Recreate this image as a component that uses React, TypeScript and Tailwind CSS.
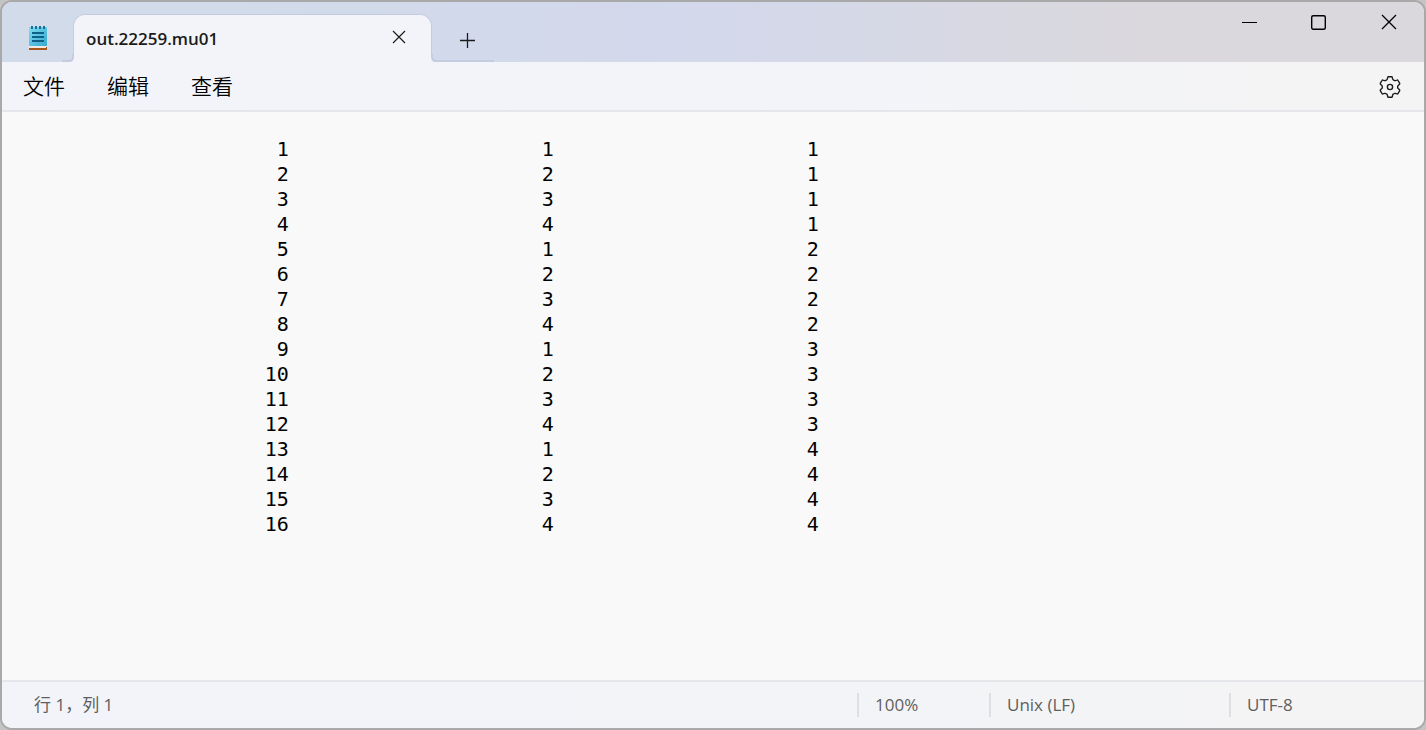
const MENUS = ["文件", "编辑", "查看"];

const ROWS = Array.from({ length: 16 }, (_, i) => [i + 1, (i % 4) + 1, Math.floor(i / 4) + 1]);
const TEXT = ROWS.map((row) => row.map((n) => String(n).padStart(22)).join("")).join("\n");

const STATUS = [
  { text: "100%", width: "w-[132px]" },
  { text: "Unix (LF)", width: "w-[240px]" },
  { text: "UTF-8", width: "w-[195px]" },
];

function NotepadIcon() {
  return (
    <svg className="h-6 w-[18px]" viewBox="0 0 18 24" aria-hidden="true">
      <defs>
        <linearGradient id="pad" x1="0" y1="0" x2="1" y2="1">
          <stop offset="0" stopColor="#7fdcf2" />
          <stop offset="1" stopColor="#35a9cf" />
        </linearGradient>
      </defs>
      <rect x="0" y="21" width="18" height="3" fill="#a9561a" />
      <rect x="0" y="19" width="17" height="3" fill="#f1e9e2" />
      <rect x="0" y="1" width="18" height="19" rx="1" fill="url(#pad)" />
      <path d="M3 0v3M7 0v3M11 0v3M15 0v3" stroke="#1d6f96" strokeWidth="2" />
      <path d="M3 7h12M3 11h12M3 15h12" stroke="#0f6089" strokeWidth="2" />
    </svg>
  );
}

function GearIcon() {
  return (
    <svg className="h-6 w-6" viewBox="0 0 24 24" fill="none" stroke="#1b1b1b" strokeWidth="1.4" strokeLinejoin="round" aria-hidden="true">
      <path d="M10.400 1.800h3.200q.6 0 .7.600l.4 1.700q.2.700.9 1l.5.300q.6.400 1.300.200l1.700-.5q.6-.2.900.4l1.600 2.700q.3.500-.1 1l-1.300 1.200q-.5.500-.5 1.200v.8q0 .7.500 1.200l1.300 1.200q.4.500.1 1l-1.600 2.700q-.3.600-.9.400l-1.700-.5q-.7-.2-1.300.2l-.5.300q-.7.300-.9 1l-.4 1.700q-.1.600-.7.600h-3.200q-.6 0-.7-.6l-.4-1.700q-.2-.7-.9-1l-.5-.3q-.6-.4-1.300-.2l-1.700.5q-.6.200-.9-.4l-1.600-2.700q-.3-.5.1-1l1.300-1.200q.5-.5.500-1.200v-.8q0-.7-.5-1.200l-1.300-1.200q-.4-.5-.1-1l1.600-2.700q.3-.6.900-.4l1.700.5q.7.200 1.300-.2l.5-.3q.7-.3.900-1l.4-1.700q.1-.6.700-.6z" />
      <circle cx="12" cy="12" r="2.600" />
    </svg>
  );
}

// curved foot where the tab runs into the toolbar
function TabFoot({ className }: { className: string }) {
  return (
    <svg className={`absolute bottom-0 h-2 w-3 ${className}`} viewBox="0 0 12 8" aria-hidden="true">
      <path d="M12 0v8H7q4 0 4-4V0z" fill="#f3f4f9" />
      <path d="M0 7h7q4 0 4-4V0" fill="none" stroke="#c5cce0" strokeWidth="2" />
    </svg>
  );
}

export default function App() {
  return (
    <div className="h-screen bg-[#c4c4c4] font-['Open_Sans','Noto_Sans_CJK_SC',sans-serif]">
      <div className="flex h-full flex-col overflow-hidden rounded-xl border-2 border-[#a9a9a9] bg-[#f9f9f9]">
        <header className="flex h-15 shrink-0 items-end bg-linear-to-r from-[#d1dbea] from-15% via-[#d3d8eb] via-50% to-[#dad8dd] to-80%">
          <div className="flex h-12 w-[71px] justify-center pt-3">
            <NotepadIcon />
          </div>
          <div className="relative flex h-12 w-[359px] items-center justify-between rounded-t-xl border border-b-0 border-[#c5cce0] bg-[#f3f4f9] pl-3">
            <TabFoot className="-left-3" />
            <TabFoot className="-right-3 -scale-x-100" />
            <span className="text-[17px] font-semibold text-[#1b1b1b]">out.22259.mu01</span>
            <button type="button" aria-label="关闭标签页" className="flex h-12 w-16 items-center justify-center pb-1">
              <svg className="h-3.5 w-3.5" viewBox="0 0 14 14" stroke="#1b1b1b" strokeWidth="1.2" aria-hidden="true">
                <path d="M1 1l12 12M13 1L1 13" />
              </svg>
            </button>
          </div>
          <div className="flex h-12 w-[62px] pl-2.5">
            <button type="button" aria-label="新建标签页" className="flex w-full items-center justify-center border-b-2 border-[#c5cce0] pt-2">
              <svg className="h-4 w-4" viewBox="0 0 16 16" stroke="#1b1b1b" strokeWidth="1.3" aria-hidden="true">
                <path d="M7.500 0v15M0 7.500h15" />
              </svg>
            </button>
          </div>
          <div className="ml-auto flex self-start">
            <button type="button" aria-label="最小化" className="flex h-10 w-[70px] items-center justify-center">
              <svg className="h-4 w-4" viewBox="0 0 16 16" stroke="#000" strokeWidth="1" aria-hidden="true">
                <path d="M1 8.500h15" />
              </svg>
            </button>
            <button type="button" aria-label="最大化" className="flex h-10 w-[70px] items-center justify-center">
              <svg className="h-4 w-4" viewBox="0 0 16 16" fill="none" stroke="#000" strokeWidth="1.4" aria-hidden="true">
                <rect x="0.700" y="1.700" width="13.600" height="13.600" rx="1.500" />
              </svg>
            </button>
            <button type="button" aria-label="关闭" className="flex h-10 w-[70px] items-center justify-center">
              <svg className="h-4 w-4" viewBox="0 0 16 16" stroke="#000" strokeWidth="1.3" aria-hidden="true">
                <path d="M1 1l14 14M15 1L1 15" />
              </svg>
            </button>
          </div>
        </header>

        <nav className="flex h-[50px] shrink-0 items-center border-b-2 border-[#e6e7eb] bg-linear-to-r from-[#f3f4f9] from-60% to-[#f4f4f5] to-90%">
          {MENUS.map((m) => (
            <button key={m} type="button" className="h-12 w-[84px] text-[21px] font-[350] text-black font-['Noto_Sans_CJK_SC',sans-serif]">
              {m}
            </button>
          ))}
          <button type="button" aria-label="设置" className="ml-auto flex h-12 w-[68px] items-center justify-center pt-0.5">
            <GearIcon />
          </button>
        </nav>

        <textarea
          aria-label="文本编辑器"
          spellCheck={false}
          wrap="off"
          defaultValue={TEXT}
          className="min-h-0 flex-1 resize-none overflow-hidden bg-[#f9f9f9] px-[22px] pt-[25px] font-['DejaVu_Sans_Mono',monospace] text-[20px] leading-[25px] text-black outline-none"
        />

        <footer className="flex h-12 shrink-0 items-center border-t-2 border-[#e6e7eb] bg-linear-to-r from-[#f2f4f9] from-30% to-[#f4f4f5] to-90% text-[17px] text-[#5f5f61]">
          <span className="flex-1 pl-8">行 1，列 1</span>
          {STATUS.map((s) => (
            <span key={s.text} className={`${s.width} h-6 border-l-2 border-[#dedfe4] pl-4 leading-6`}>{s.text}</span>
          ))}
        </footer>
      </div>
    </div>
  );
}
